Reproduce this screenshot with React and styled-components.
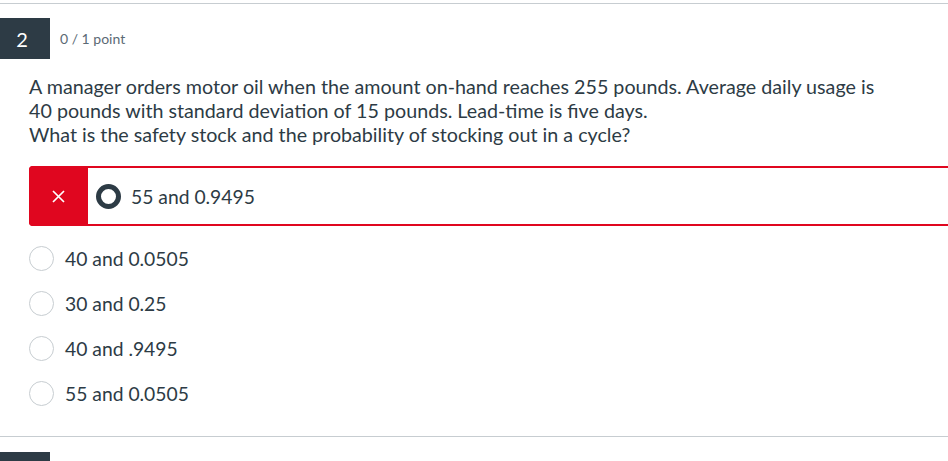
import React from 'react';
import styled, { createGlobalStyle } from 'styled-components';

const GlobalStyle = createGlobalStyle`
  body {
    margin: 0;
    background: #fff;
    font-family: Lato, "Noto Sans", sans-serif;
    color: #2d3b45;
  }
`;

const Page = styled.div`
  padding-top: 3px;
  overflow: hidden;
  height: 458px;
`;

const Question = styled.div`
  border-top: 1px solid #c7cdd1;
  padding-top: 14px;
`;

const Header = styled.div`
  display: flex;
  align-items: center;
  height: 41px;
`;

const Badge = styled.div`
  width: 50px;
  height: 41px;
  background: #2d3b45;
  color: #fff;
  font-size: 20px;
  display: flex;
  align-items: center;
  justify-content: center;
  padding-right: 6px;
  box-sizing: border-box;
`;

const Points = styled.span`
  margin-left: 10px;
  font-size: 14px;
  color: #5b6a75;
`;

const Body = styled.div`
  padding: 16px 0 0 29px;
`;

const Prompt = styled.p`
  margin: 0;
  font-size: 19.7px;
  line-height: 24px;
  color: #2d3b45;
`;

const Answers = styled.div`
  margin-top: 19px;
  display: flex;
  flex-direction: column;
`;

const WrongAnswer = styled.div`
  display: flex;
  align-items: center;
  height: 60px;
  box-sizing: border-box;
  border: 2px solid #e0061f;
  border-right: none;
  border-radius: 4px 0 0 4px;
  margin-bottom: 10px;
`;

const Flag = styled.div`
  width: 59px;
  margin: -2px 0 -2px -2px;
  align-self: stretch;
  background: #e0061f;
  display: flex;
  align-items: center;
  justify-content: center;
  border-radius: 4px 0 0 4px;
`;

const Option = styled.div`
  display: flex;
  align-items: center;
  height: 45px;
  font-size: 19.3px;
  gap: ${p => (p.selected ? '10px' : '11px')};
  padding-left: ${p => (p.selected ? '8px' : '0')};
`;

const Radio = styled.span`
  width: 25px;
  height: 25px;
  box-sizing: border-box;
  border-radius: 50%;
  border: ${p => (p.selected ? '5px solid #2d3b45' : '1px solid #c7cdd1')};
  background: #fff;
  flex: none;
`;

const Divider = styled.div`
  margin-top: 20px;
  border-top: 1px solid #c7cdd1;
`;

const NextBadge = styled.div`
  margin-top: 15px;
  width: 50px;
  height: 20px;
  background: #2d3b45;
`;

const Cross = () => (
  <svg width="15" height="15" viewBox="0 0 15 15">
    <path d="M2 2 L13 13 M13 2 L2 13" stroke="#fff" strokeWidth="1.7" />
  </svg>
);

const options = ['40 and 0.0505', '30 and 0.25', '40 and .9495', '55 and 0.0505'];

export default function App() {
  return (
    <Page>
      <GlobalStyle />
      <Question>
        <Header>
          <Badge>2</Badge>
          <Points>0 / 1 point</Points>
        </Header>
        <Body>
          <Prompt>
            A manager orders motor oil when the amount on-hand reaches 255 pounds. Average daily usage is
            <br />
            40 pounds with standard deviation of 15 pounds. Lead-time is five days.
            <br />
            What is the safety stock and the probability of stocking out in a cycle?
          </Prompt>
          <Answers>
            <WrongAnswer>
              <Flag>
                <Cross />
              </Flag>
              <Option selected>
                <Radio selected />
                55 and 0.9495
              </Option>
            </WrongAnswer>
            {options.map(o => (
              <Option key={o}>
                <Radio />
                {o}
              </Option>
            ))}
          </Answers>
        </Body>
        <Divider />
        <NextBadge />
      </Question>
    </Page>
  );
}
